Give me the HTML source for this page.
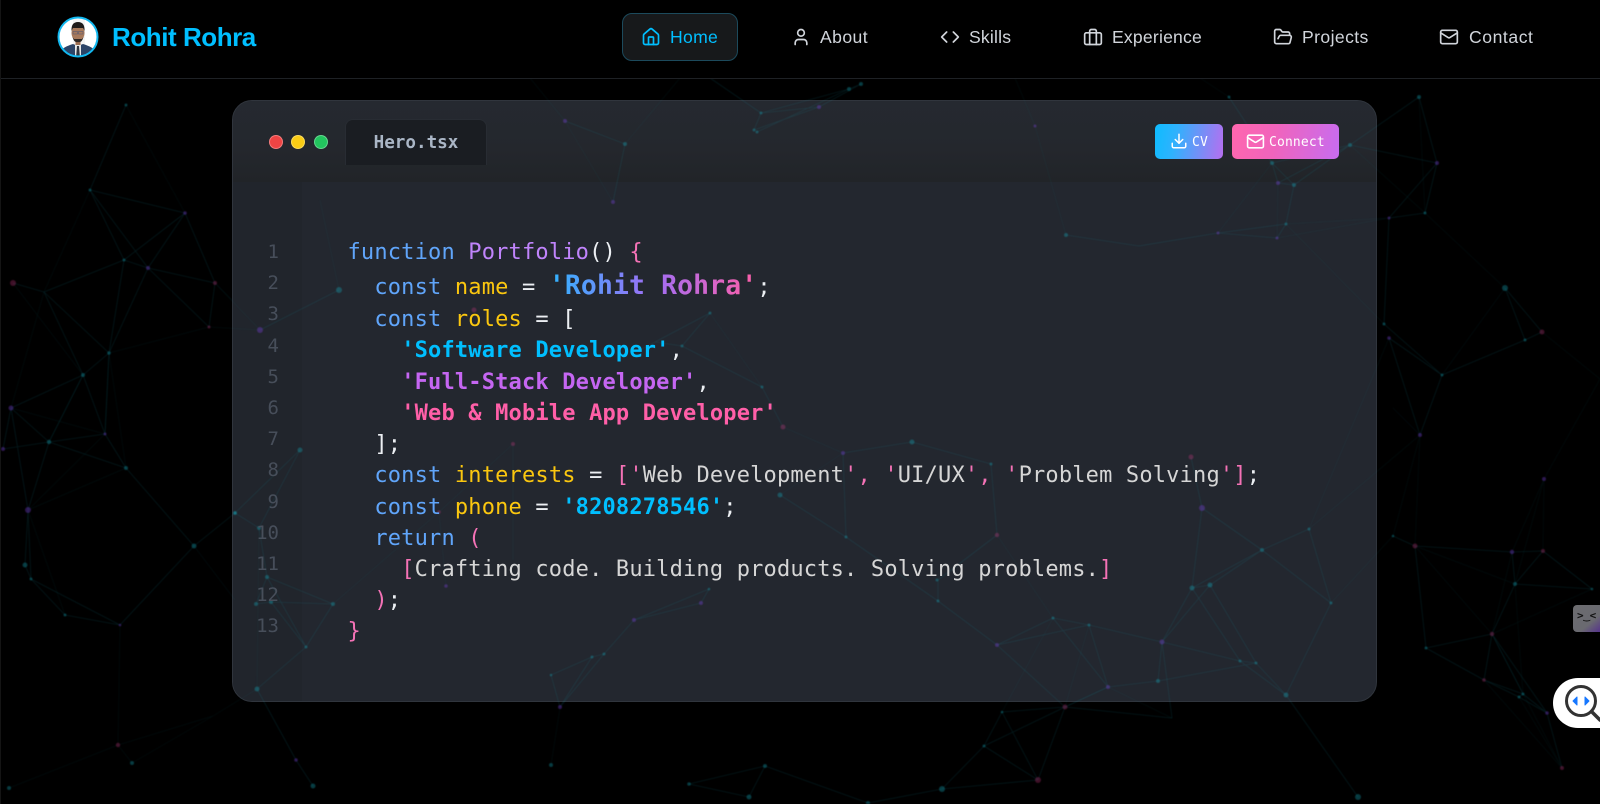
<!DOCTYPE html>
<html lang="en"><head><meta charset="utf-8"><title>Rohit Rohra</title>
<style>
html,body{margin:0;padding:0;width:1600px;height:804px;overflow:hidden;background:#000}
body{position:relative;font-family:"Liberation Sans",sans-serif}
.abs{position:absolute}
#nav{position:absolute;left:0;top:0;width:1600px;height:78px;background:#000;border-bottom:1px solid #1e2125;z-index:5}
.nt{position:absolute;top:25px;line-height:24px;font-size:17.6px;color:#d1d5db;white-space:pre;letter-spacing:.4px}
.ni{position:absolute;top:27px;width:20px;height:20px;fill:none;stroke:#d1d5db;stroke-width:2;stroke-linecap:round;stroke-linejoin:round}
#logo{position:absolute;left:112px;top:22px;line-height:30px;font-size:26px;font-weight:700;color:#00bfff;white-space:pre;letter-spacing:-.45px}
#homebox{position:absolute;left:622px;top:13px;width:114px;height:46px;background:#17191b;border:1px solid #1c4a5c;border-radius:10px}
#card{position:absolute;left:232px;top:100px;width:1143px;height:600px;background:#23272f;border:1px solid #30353d;border-radius:20px;z-index:1;overflow:hidden}
#hdr{position:absolute;left:0;top:0;right:0;height:81px;background:linear-gradient(180deg,#252930 0%,#24272d 60%,#212428 100%)}
#gut{position:absolute;left:0;top:81px;width:69px;bottom:0;background:#21252c}
#net{position:absolute;left:0;top:0;z-index:2;filter:blur(.4px)}
.c{position:absolute;z-index:3}
#tab{left:345px;top:119px;width:140px;height:45px;background:#1a1d22;border:1px solid #282c33;border-bottom:0;border-radius:8px 8px 0 0;text-align:center;font:700 17.6px/47px "DejaVu Sans Mono",monospace;color:#aab6c6}
.dot{width:12px;height:12px;border-radius:50%;top:135px;border:1px solid rgba(255,255,255,.3)}
.btn{top:124px;height:35px;border-radius:5px;font:13px/37px "DejaVu Sans Mono",monospace;color:#fff;white-space:pre;letter-spacing:.15px}
.ln,.cl{position:absolute;z-index:3;font-family:"DejaVu Sans Mono",monospace;white-space:pre}
.ln{left:230px;width:49px;text-align:right;font-size:19px;line-height:31px;color:#474e5a}
.cl{left:347.5px;font-size:22px;line-height:31px;color:#d4d4d4;letter-spacing:.175px}
.k{color:#60a5fa}.f{color:#c084fc}.y{color:#fbc70f}.w{color:#eceff3}.p{color:#f472b6}
.s1{color:#00bfff;font-weight:700}.s2{color:#c566f2;font-weight:700}.s3{color:#ff5fa8;font-weight:700}
.g{color:#d6d6d6}
.grad{font-size:26.4px;font-weight:700;letter-spacing:.15px;background:linear-gradient(90deg,#2fb4ff 0%,#a06ef5 50%,#ff5fa8 100%);-webkit-background-clip:text;background-clip:text;color:transparent}
</style></head>
<body>
<div class="abs" style="left:0;top:0;width:1px;height:804px;background:#141414;z-index:6"></div>

<div id="nav">
<svg class="abs" style="left:57px;top:16px" width="42" height="42" viewBox="0 0 42 42">
<defs><clipPath id="av"><circle cx="21" cy="21" r="19"/></clipPath></defs>
<circle cx="21" cy="21" r="20" fill="#fff"/>
<g clip-path="url(#av)">
<rect x="16" y="3" width="12" height="30" fill="#f4f4f4"/>
<path d="M4 42V35Q6 31 16 28L21 30L26 28Q36 31 38 35V42Z" fill="#2c4468"/>
<path d="M18 28L21 30L24 28L24 42H18Z" fill="#e8e8e8"/>
<path d="M20 30H22L23 42H19Z" fill="#30353f"/>
<rect x="18.5" y="23" width="5" height="6" fill="#9c6d50"/>
<ellipse cx="21" cy="17" rx="6.5" ry="8" fill="#a87a5c"/>
<path d="M14.5 15Q14 6 21 6Q28 6 27.500 15L26 12H16Z" fill="#1f1b1a"/>
<path d="M15.500 21Q17 27 21 26Q25 27 26.500 21L25 23H17Z" fill="#2e2826"/>
<rect x="16" y="15.500" width="4.500" height="2.500" fill="none" stroke="#5a5a70" stroke-width=".6"/>
<rect x="21.500" y="15.500" width="4.500" height="2.500" fill="none" stroke="#5a5a70" stroke-width=".6"/>
</g>
<circle cx="21" cy="21" r="19.500" fill="none" stroke="#12b8f0" stroke-width="2"/>
</svg>
<div id="logo">Rohit Rohra</div>

<div id="homebox"></div>
<svg class="ni" style="left:641px;stroke:#00bfff" viewBox="0 0 24 24"><path d="M15 21v-8a1 1 0 0 0-1-1h-4a1 1 0 0 0-1 1v8"/><path d="M3 10a2 2 0 0 1 .709-1.528l7-5.999a2 2 0 0 1 2.582 0l7 5.999A2 2 0 0 1 21 10v9a2 2 0 0 1-2 2H5a2 2 0 0 1-2-2z"/></svg>
<div class="nt" style="left:670px;color:#00bfff;letter-spacing:.3px">Home</div>
<svg class="ni" style="left:791px" viewBox="0 0 24 24"><path d="M19 21v-2a4 4 0 0 0-4-4H9a4 4 0 0 0-4 4v2"/><circle cx="12" cy="7" r="4"/></svg>
<div class="nt" style="left:820px">About</div>
<svg class="ni" style="left:940px" viewBox="0 0 24 24"><polyline points="16 18 22 12 16 6"/><polyline points="8 6 2 12 8 18"/></svg>
<div class="nt" style="left:969px;letter-spacing:.2px">Skills</div>
<svg class="ni" style="left:1083px" viewBox="0 0 24 24"><path d="M16 21V5a2 2 0 0 0-2-2h-4a2 2 0 0 0-2 2v16"/><rect x="2" y="7" width="20" height="14" rx="2"/></svg>
<div class="nt" style="left:1112px;letter-spacing:.2px">Experience</div>
<svg class="ni" style="left:1273px" viewBox="0 0 24 24"><path d="m6 14 1.500-2.900A2 2 0 0 1 9.240 10H20a2 2 0 0 1 1.940 2.500l-1.540 6a2 2 0 0 1-1.950 1.500H4a2 2 0 0 1-2-2V5a2 2 0 0 1 2-2h3.900a2 2 0 0 1 1.690.9l.81 1.200a2 2 0 0 0 1.670.9H18a2 2 0 0 1 2 2v2"/></svg>
<div class="nt" style="left:1302px">Projects</div>
<svg class="ni" style="left:1439px" viewBox="0 0 24 24"><rect x="2" y="4" width="20" height="16" rx="2"/><path d="m22 7-8.970 5.700a1.940 1.940 0 0 1-2.060 0L2 7"/></svg>
<div class="nt" style="left:1469px;letter-spacing:.55px">Contact</div>
</div>

<div id="card"><div id="hdr"></div><div id="gut"></div></div>

<svg id="net" width="1600" height="804" viewBox="0 0 1600 804">
<g fill="none" stroke="#14a3b8" stroke-width=".8" stroke-opacity=".15">
<path d="M126 105L90 190M90 190L124 260M90 190L148 268M90 190L185 213M185 213L124 260M185 213L148 268M185 213L215 283M124 260L148 268M124 260L44 292M148 268L215 283M148 268L209 327M124 260L109 353M148 268L109 353M13 283L44 292M44 292L109 353M44 292L83 375M215 283L209 327M109 353L83 375M109 353L105 434M83 375L11 408M83 375L105 434M83 375L49 442M105 434L126 468M11 408L49 442M11 408L3 449M11 408L28 510M3 449L49 442M49 442L28 510M49 442L105 434M49 442L126 468M28 510L25 565M28 510L31 579M25 565L31 579M31 579L65 615M65 615L120 625M31 579L120 625M126 468L194 546M194 546L120 625M194 546L235 513"/>
<path d="M1419 97L1437 163M1437 163L1425 213M1437 163L1389 218M1425 213L1389 218M1389 218L1384 324M1505 288L1542 332M1505 288L1525 340M1542 332L1525 340M1525 340L1442 375M1384 324L1442 375M1389 338L1442 375M1389 338L1420 435M1442 375L1420 435M1393 536L1415 546M1415 546L1512 552M1415 546L1426 648M1512 552L1543 551M1512 552L1515 584M1543 551L1515 584M1543 551L1592 589M1515 584L1592 589M1515 584L1492 634M1492 634L1426 648M1492 634L1484 680M1426 648L1484 680M1484 680L1519 697M1484 680L1523 694M1523 694L1519 697M1523 694L1547 713M1519 697L1547 713M1547 713L1562 768M1492 634L1547 713M1492 634L1523 694"/>
<path d="M565 121L625 144M625 144L613 202M761 113L819 107M761 113L754 130M757 132L849 89M819 107L861 84M754 130L819 107M849 89L861 84M761 113L849 89M761 113L710 78M1066 235L1139 246M1139 246L1218 233M1218 233L1286 224M1218 233L1277 238M1286 224L1277 238M1229 97L1272 163M1272 163L1278 183M1278 183L1294 185M1272 163L1294 185M1294 185L1286 224M1278 183L1350 145M1294 185L1350 145M1272 163L1350 145M1350 145L1437 163M1350 145L1419 97"/>
<path d="M339 290L260 330M710 313L682 346M710 313L655 342M682 346L655 342M710 313L640 350M682 346L762 387M762 387L783 427M843 453L912 442M912 442L991 464M843 453L846 537M846 537L780 495M846 537L938 601M991 464L997 535M997 535L938 580M938 580L938 601M938 601L997 645M997 645L1053 618M1053 618L1089 625M997 645L1089 625M1089 625L1162 642M1162 642L1240 661M1162 642L1158 681M1158 681L1108 687M1108 687L1065 707M997 645L1065 707M1053 618L1108 687M1089 625L1108 687M1158 681L1256 663M1240 661L1256 663M1256 663L1286 695M1240 661L1286 695M1192 588L1210 585M1192 588L1162 642M1210 585L1162 642M1192 588L1240 661M1210 585L1256 663M1192 588L1202 508M1202 508L1262 550M1262 550L1192 588M1262 550L1210 585M1262 550L1309 529M1262 550L1331 603M1309 529L1331 603M1202 508L1191 457M1331 603L1286 695"/>
<path d="M300 450L235 513M300 450L259 528M235 513L259 528M259 528L267 577M267 577L256 604M256 604L271 602M271 602L333 604M267 577L333 604M333 604L306 647M267 577L306 647M306 647L257 689M271 602L306 647M551 675L560 707M551 675L592 657M592 657L604 654M560 707L592 657M560 707L604 654M604 654L634 620M634 620L701 603M701 603L709 589M634 620L709 589M296 760L313 786M257 689L296 760M689 784L765 766M689 784L749 797M765 766L749 797M765 766L868 803M868 803L942 789M942 789L1038 780M984 746L1038 780M984 746L942 789M1002 712L984 746M1002 712L1038 780M1065 707L1002 712M1065 707L1038 780M1065 707L984 746M1065 707L1172 718M1172 718L1162 642M1286 695L1358 797"/>
</g>
<g fill="none" stroke="#14a3b8" stroke-width=".7" stroke-opacity=".07">
<path d="M90 190L44 292M215 283L232 300M209 327L260 330M109 353L209 327M83 375L49 442M11 408L105 434M11 408L44 292M105 434L28 510M126 468L28 510M105 434L109 353M126 468L109 353M28 510L65 615M13 283L83 375M120 625L118 745M118 745L132 763M118 745L213 716M132 763L213 716M118 745L9 788M213 716L257 689M126 105L185 213"/>
<path d="M1425 213L1505 288M1419 97L1425 213M1505 288L1442 375M1542 332L1600 379M1600 379L1544 479M1544 479L1512 552M1544 479L1543 551M1544 479L1515 584M1420 435L1415 546M1420 435L1393 536M1415 546L1515 584M1415 546L1492 634M1512 552L1492 634M1515 584L1523 694M1492 634L1592 589M1492 634L1562 768M1519 697L1562 768M1393 408L1420 435M1484 680L1562 768"/>
<path d="M565 121L613 202M565 121L530 78M625 144L680 78M1035 126L1015 78M1035 126L1066 235M1229 97L1200 78M1272 163L1218 233M1278 183L1277 238M1286 224L1389 218M1277 238L1389 218M1350 145L1425 213M1286 224L1384 324M1309 529L1389 338M1309 529L1420 435M1331 603L1393 536M780 495L843 453M997 535L1053 618M1089 625L1065 707"/>
<path d="M339 290L320 200M260 330L215 283M710 313L762 387M783 427L843 453M513 444L513 560M333 604L439 512M439 512L513 444M439 512L446 586M257 689L259 528M194 546L235 600M560 708L551 765M1172 718L1108 687M1002 712L1053 618M1065 707L1108 687"/>
</g>
<g fill="#17b2c4" fill-opacity=".32">
<circle cx="126" cy="105" r="1.500"/><circle cx="90" cy="190" r="1.500"/><circle cx="124" cy="260" r="1.500"/><circle cx="109" cy="353" r="1.800"/><circle cx="83" cy="375" r="2"/><circle cx="49" cy="442" r="2.200"/><circle cx="126" cy="468" r="2"/><circle cx="194" cy="546" r="2.500"/><circle cx="235" cy="513" r="2"/><circle cx="25" cy="565" r="2.500"/><circle cx="31" cy="579" r="1.500"/><circle cx="65" cy="615" r="1.500"/><circle cx="132" cy="763" r="2"/><circle cx="9" cy="788" r="2"/>
<circle cx="1419" cy="97" r="2"/><circle cx="1425" cy="213" r="1.500"/><circle cx="1505" cy="288" r="3"/><circle cx="1525" cy="340" r="1.500"/><circle cx="1384" cy="324" r="1.500"/><circle cx="1442" cy="375" r="1.500"/><circle cx="1393" cy="536" r="1.300"/><circle cx="1515" cy="584" r="2"/><circle cx="1592" cy="589" r="1.300"/><circle cx="1426" cy="648" r="1.500"/><circle cx="1519" cy="697" r="1.500"/><circle cx="1523" cy="694" r="1.500"/>
<circle cx="625" cy="144" r="2"/><circle cx="761" cy="113" r="1.500"/><circle cx="849" cy="89" r="2"/><circle cx="861" cy="84" r="2"/><circle cx="754" cy="130" r="1.500"/><circle cx="757" cy="132" r="1.500"/><circle cx="1066" cy="235" r="2"/><circle cx="1229" cy="97" r="1.500"/><circle cx="1350" cy="145" r="2"/><circle cx="1272" cy="163" r="2"/><circle cx="1294" cy="185" r="2"/><circle cx="1286" cy="224" r="1.500"/>
<circle cx="339" cy="290" r="3"/><circle cx="710" cy="313" r="1.500"/><circle cx="682" cy="346" r="1.500"/><circle cx="762" cy="387" r="1.500"/><circle cx="912" cy="442" r="2.500"/><circle cx="991" cy="464" r="1.500"/><circle cx="780" cy="495" r="2.500"/><circle cx="846" cy="537" r="1.500"/><circle cx="938" cy="601" r="1.500"/><circle cx="937" cy="580" r="1.500"/><circle cx="1053" cy="618" r="1.500"/><circle cx="1089" cy="625" r="1.500"/><circle cx="1158" cy="681" r="2"/><circle cx="1192" cy="588" r="2.500"/><circle cx="1210" cy="585" r="2.500"/><circle cx="1262" cy="550" r="2"/><circle cx="1309" cy="529" r="1.500"/><circle cx="1331" cy="603" r="1.500"/><circle cx="1240" cy="661" r="1.500"/><circle cx="1256" cy="663" r="1.500"/><circle cx="1286" cy="695" r="2.500"/>
<circle cx="300" cy="450" r="2.500"/><circle cx="235" cy="513" r="1.500"/><circle cx="259" cy="528" r="2"/><circle cx="267" cy="577" r="2"/><circle cx="256" cy="604" r="2"/><circle cx="271" cy="602" r="2"/><circle cx="333" cy="604" r="2"/><circle cx="306" cy="647" r="1.500"/><circle cx="257" cy="689" r="2.500"/><circle cx="551" cy="675" r="1.300"/><circle cx="592" cy="657" r="1.500"/><circle cx="604" cy="654" r="1.500"/><circle cx="709" cy="589" r="1.300"/>
<circle cx="313" cy="786" r="2.500"/><circle cx="551" cy="765" r="2"/><circle cx="689" cy="784" r="1.800"/><circle cx="765" cy="766" r="2"/><circle cx="749" cy="797" r="2.500"/><circle cx="868" cy="803" r="2"/><circle cx="942" cy="789" r="3"/><circle cx="984" cy="746" r="1.500"/><circle cx="1002" cy="712" r="1.300"/><circle cx="1358" cy="797" r="3"/>
</g>
<g fill="#7d3fe0" fill-opacity=".35">
<circle cx="185" cy="213" r="1.800"/><circle cx="148" cy="268" r="2"/><circle cx="11" cy="408" r="2.500"/><circle cx="3" cy="449" r="2"/><circle cx="28" cy="510" r="3"/><circle cx="105" cy="434" r="1.500"/><circle cx="120" cy="625" r="1.300"/>
<circle cx="1437" cy="163" r="2"/><circle cx="1389" cy="218" r="1.500"/><circle cx="1389" cy="338" r="1.800"/><circle cx="1420" cy="435" r="2"/><circle cx="1544" cy="479" r="2"/><circle cx="1512" cy="552" r="2.200"/><circle cx="1547" cy="713" r="1.800"/>
<circle cx="565" cy="121" r="2"/><circle cx="613" cy="202" r="2"/><circle cx="819" cy="107" r="2"/><circle cx="1035" cy="126" r="1.500"/><circle cx="1278" cy="183" r="2"/><circle cx="1218" cy="233" r="1.500"/><circle cx="1277" cy="238" r="1.500"/>
<circle cx="260" cy="330" r="3"/><circle cx="843" cy="453" r="2"/><circle cx="997" cy="645" r="2"/><circle cx="1162" cy="642" r="2.500"/><circle cx="1108" cy="687" r="2"/><circle cx="1202" cy="508" r="3"/><circle cx="446" cy="586" r="1.800"/><circle cx="701" cy="603" r="2"/><circle cx="634" cy="620" r="2"/><circle cx="560" cy="707" r="2"/><circle cx="296" cy="760" r="1.800"/>
</g>
<g fill="#e23a8c" fill-opacity=".28">
<circle cx="13" cy="283" r="3"/><circle cx="215" cy="283" r="2"/><circle cx="209" cy="327" r="1.500"/><circle cx="118" cy="745" r="2.200"/>
<circle cx="1542" cy="332" r="2.500"/><circle cx="1415" cy="546" r="2.500"/><circle cx="1543" cy="551" r="2"/><circle cx="1492" cy="634" r="2.200"/><circle cx="1484" cy="680" r="1.800"/><circle cx="1562" cy="768" r="2"/>
<circle cx="474" cy="310" r="2.500"/><circle cx="783" cy="427" r="2.500"/><circle cx="997" cy="535" r="2.200"/><circle cx="513" cy="444" r="2"/><circle cx="1191" cy="457" r="2.500"/><circle cx="1065" cy="707" r="2.500"/><circle cx="1038" cy="780" r="3"/><circle cx="439" cy="512" r="1.800"/>
</g>
</svg>

<div class="c dot" style="left:269px;background:#ef4444"></div>
<div class="c dot" style="left:291px;background:#facc15"></div>
<div class="c dot" style="left:314px;background:#22c55e"></div>
<div id="tab" class="c">Hero.tsx</div>

<div class="c btn" style="left:1155px;width:68px;background:linear-gradient(100deg,#0dbcff 0%,#2fb2fd 30%,#b76ef0 100%)"><svg class="abs" style="left:15px;top:8px" width="18" height="18" viewBox="0 0 24 24" fill="none" stroke="#fff" stroke-width="2" stroke-linecap="round" stroke-linejoin="round"><path d="M21 15v4a2 2 0 0 1-2 2H5a2 2 0 0 1-2-2v-4"/><polyline points="7 10 12 15 17 10"/><line x1="12" y1="15" x2="12" y2="3"/></svg><span class="abs" style="left:37px;top:0">CV</span></div>
<div class="c btn" style="left:1232px;width:107px;background:linear-gradient(100deg,#ff66ae 0%,#f064bc 40%,#c76cf0 100%)"><svg class="abs" style="left:14px;top:7.500px" width="19" height="19" viewBox="0 0 24 24" fill="none" stroke="#fff" stroke-width="2" stroke-linecap="round" stroke-linejoin="round"><rect x="2" y="4" width="20" height="16" rx="2"/><path d="m22 7-8.970 5.700a1.940 1.940 0 0 1-2.060 0L2 7"/></svg><span class="abs" style="left:37px;top:0">Connect</span></div>

<div class="ln" style="top:237px">1</div>
<div class="ln" style="top:268px">2</div>
<div class="ln" style="top:299px">3</div>
<div class="ln" style="top:331px">4</div>
<div class="ln" style="top:362px">5</div>
<div class="ln" style="top:393px">6</div>
<div class="ln" style="top:424px">7</div>
<div class="ln" style="top:455px">8</div>
<div class="ln" style="top:487px">9</div>
<div class="ln" style="top:518px">10</div>
<div class="ln" style="top:549px">11</div>
<div class="ln" style="top:580px">12</div>
<div class="ln" style="top:611px">13</div>

<div class="cl" style="top:237px"><span class="k">function</span> <span class="f">Portfolio</span><span class="w">()</span> <span class="p">{</span></div>
<div class="cl" style="top:270px">  <span class="k">const</span> <span class="y">name</span> <span class="w">=</span> <span class="grad">'Rohit Rohra'</span><span class="w">;</span></div>
<div class="cl" style="top:304px">  <span class="k">const</span> <span class="y">roles</span> <span class="w">=</span> <span class="w">[</span></div>
<div class="cl" style="top:335px">    <span class="s1">'Software Developer'</span><span class="w">,</span></div>
<div class="cl" style="top:367px">    <span class="s2">'Full-Stack Developer'</span><span class="w">,</span></div>
<div class="cl" style="top:398px">    <span class="s3">'Web &amp; Mobile App Developer'</span></div>
<div class="cl" style="top:429px">  <span class="w">];</span></div>
<div class="cl" style="top:460px">  <span class="k">const</span> <span class="y">interests</span> <span class="w">=</span> <span class="p">['</span><span class="g">Web Development</span><span class="p">', '</span><span class="g">UI/UX</span><span class="p">', '</span><span class="g">Problem Solving</span><span class="p">']</span><span class="w">;</span></div>
<div class="cl" style="top:492px">  <span class="k">const</span> <span class="y">phone</span> <span class="w">=</span> <span class="s1">'8208278546'</span><span class="w">;</span></div>
<div class="cl" style="top:523px">  <span class="k">return</span> <span class="p">(</span></div>
<div class="cl" style="top:554px">    <span class="p">[</span><span class="g">Crafting code. Building products. Solving problems.</span><span class="p">]</span></div>
<div class="cl" style="top:585px">  <span class="p">)</span><span class="w">;</span></div>
<div class="cl" style="top:616px"><span class="p">}</span></div>

<div class="abs" style="left:1573px;top:605px;width:27px;height:27px;border-radius:4px 0 0 4px;background:linear-gradient(140deg,#6c6c70 0%,#6a6a70 65%,#56348c 100%);z-index:4;font:700 11px/22px 'DejaVu Sans Mono',monospace;color:#111;text-align:center;letter-spacing:-.3px">&gt;‿&lt;</div>
<div class="abs" style="left:1553px;top:678px;width:47px;height:50px;border-radius:25px 0 0 25px;background:#fff;z-index:4;overflow:hidden">
<svg width="47" height="50" viewBox="0 0 47 50"><circle cx="28" cy="23" r="14.500" fill="#fff" stroke="#333" stroke-width="3"/><path d="M38.500 33.500L47 42" stroke="#333" stroke-width="3.500" stroke-linecap="round"/><path d="M24 19L20 23L24 27Z" fill="#1677ff" stroke="#1677ff" stroke-width="1" stroke-linejoin="round"/><path d="M32 19L36 23L32 27Z" fill="#1677ff" stroke="#1677ff" stroke-width="1" stroke-linejoin="round"/></svg>
</div>
</body></html>
